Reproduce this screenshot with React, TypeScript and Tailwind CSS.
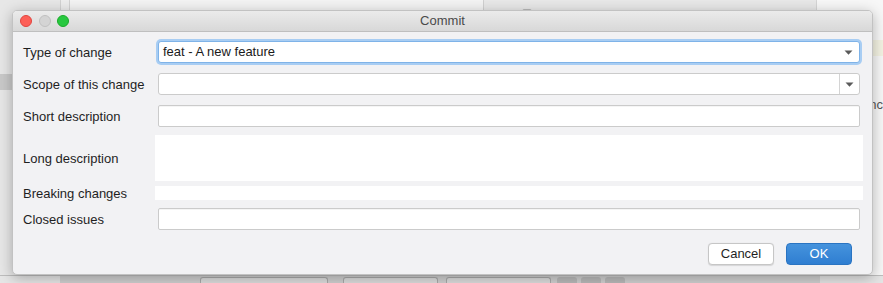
import React from 'react';

const font = { fontFamily: '"Liberation Sans", Arial, sans-serif' };

const Arrow: React.FC = () => (
  <svg width="9" height="5" viewBox="0 0 9 5" className="shrink-0">
    <path d="M0.5 0.5 L8.5 0.5 L4.5 4.8 Z" fill="#5a5a5a" />
  </svg>
);

const Label: React.FC<{ children: React.ReactNode }> = ({ children }) => (
  <div className="text-[13px] leading-none text-[#1f1f1f] whitespace-nowrap">{children}</div>
);

const TextField: React.FC = () => (
  <div className="h-[22px] bg-white border border-[#cbcbcb] rounded-[2px] shadow-[inset_0_1px_0_rgba(0,0,0,0.04)]" />
);

const Background: React.FC = () => (
  <div className="absolute inset-0 flex flex-col">
    <div className="flex flex-1">
      <div className="w-[60px] bg-[#e7e7e7] flex flex-col">
        <div className="h-[74px]" />
        <div className="h-[16px] bg-[#c9c9c9]" />
        <div className="flex-1" />
      </div>
      <div className="w-[10px] bg-[#ededed] border-x border-[#d2d2d2]" />
      <div className="w-[415px] bg-[#f3f3f3]" />
      <div className="w-[335px] bg-[#e8e8e8] border-l border-[#d0d0d0] flex">
        <div className="ml-[38px] mt-[9px] w-[10px] h-[10px] border border-[#b8b8b8] rounded-[2px] bg-[#f4f4f4]" />
      </div>
      <div className="flex-1 bg-[#f7f7f7] border-l border-[#d5d5d5] flex flex-col">
        <div className="h-[40px]" />
        <div className="h-[16px] bg-[#f3f2e2]" />
        <div className="h-[42px]" />
        <div className="pl-[52px] text-[13px] leading-none text-[#555]" style={font}>nc</div>
      </div>
    </div>
    <div className="h-[8px] flex bg-[#cfcfcf] border-t border-[#bdbdbd]">
      <div className="w-[60px] bg-[#e6e6e6]" />
      <div className="w-[140px]" />
      <div className="w-[128px] mt-[1px] border-x border-t border-[#a9a9a9] rounded-t-[3px] bg-[#dcdcdc]" />
      <div className="w-[15px]" />
      <div className="w-[95px] mt-[1px] border-x border-t border-[#a9a9a9] rounded-t-[3px] bg-[#dcdcdc]" />
      <div className="w-[8px]" />
      <div className="w-[105px] mt-[1px] border-x border-t border-[#a9a9a9] rounded-t-[3px] bg-[#dcdcdc]" />
      <div className="w-[6px]" />
      <div className="w-[20px] mt-[1px] rounded-t-[3px] bg-[#b9b9b9]" />
      <div className="w-[4px]" />
      <div className="w-[20px] mt-[1px] rounded-t-[3px] bg-[#b9b9b9]" />
      <div className="w-[4px]" />
      <div className="w-[20px] mt-[1px] rounded-t-[3px] bg-[#b9b9b9]" />
      <div className="flex-1" />
      <div className="w-[63px] bg-[#e4e4e4]" />
    </div>
  </div>
);

export default function App() {
  return (
    <div className="relative w-[883px] h-[283px] overflow-hidden" style={font}>
      <Background />
      <div className="absolute left-[12px] top-[10px] w-[861px] h-[265px] rounded-[5px] bg-[#f2f2f4] border border-[#c2c2c2] shadow-[0_3px_14px_rgba(0,0,0,0.28)] flex flex-col overflow-hidden">
        <div className="relative h-[21px] shrink-0 bg-gradient-to-b from-[#ebebeb] to-[#d8d8d8] border-b border-[#bfbfbf] flex items-center px-[7px] gap-[6.5px]">
          <div className="w-[12px] h-[12px] rounded-full bg-[#fd5f57] border border-[#e0443e]" />
          <div className="w-[12px] h-[12px] rounded-full bg-[#d4d4d4] border border-[#c0c0c0]" />
          <div className="w-[12px] h-[12px] rounded-full bg-[#28c840] border border-[#1aab29]" />
          <div className="absolute inset-0 flex items-center justify-center text-[13px] text-[#4a4a4a] pointer-events-none">
            Commit
          </div>
        </div>

        <div className="flex-1 flex flex-col pl-[10px] pr-[12px] pt-[9px]">
          <div className="grid grid-cols-[135px_1fr] items-center">
            <Label>Type of change</Label>
            <div className="h-[22px] bg-white border border-[#7fb3e8] rounded-[3px] ring-[2px] ring-[#a8cdf3] flex items-center pl-[4px] pr-[6px]">
              <span className="flex-1 text-[13px] text-[#1a1a1a]">feat - A new feature</span>
              <Arrow />
            </div>
          </div>

          <div className="grid grid-cols-[135px_1fr] items-center mt-[10px]">
            <Label>Scope of this change</Label>
            <div className="h-[22px] bg-white border border-[#cbcbcb] rounded-[3px] flex">
              <div className="flex-1" />
              <div className="w-[20px] border-l border-[#d4d4d4] flex items-center justify-center">
                <Arrow />
              </div>
            </div>
          </div>

          <div className="grid grid-cols-[135px_1fr] items-center mt-[10px]">
            <Label>Short description</Label>
            <TextField />
          </div>

          <div className="grid grid-cols-[135px_1fr] items-center mt-[8px]">
            <Label>Long description</Label>
            <div className="h-[46px] bg-white -mx-[3px]" />
          </div>

          <div className="grid grid-cols-[135px_1fr] items-center mt-[5px]">
            <Label>Breaking changes</Label>
            <div className="h-[14px] bg-white -mx-[3px]" />
          </div>

          <div className="grid grid-cols-[135px_1fr] items-center mt-[8px]">
            <Label>Closed issues</Label>
            <TextField />
          </div>

          <div className="flex justify-end gap-[12px] mt-[13px] pr-[8px]">
            <button className="w-[66px] h-[22px] bg-white border border-[#c6c6c6] rounded-[4px] shadow-[0_0.5px_1px_rgba(0,0,0,0.12)] text-[13px] text-[#1f1f1f]">
              Cancel
            </button>
            <button className="w-[66px] h-[22px] bg-gradient-to-b from-[#4593dd] to-[#2f7ed1] border border-[#2a74c2] rounded-[4px] text-[13px] text-white">
              OK
            </button>
          </div>
        </div>
      </div>
    </div>
  );
}
